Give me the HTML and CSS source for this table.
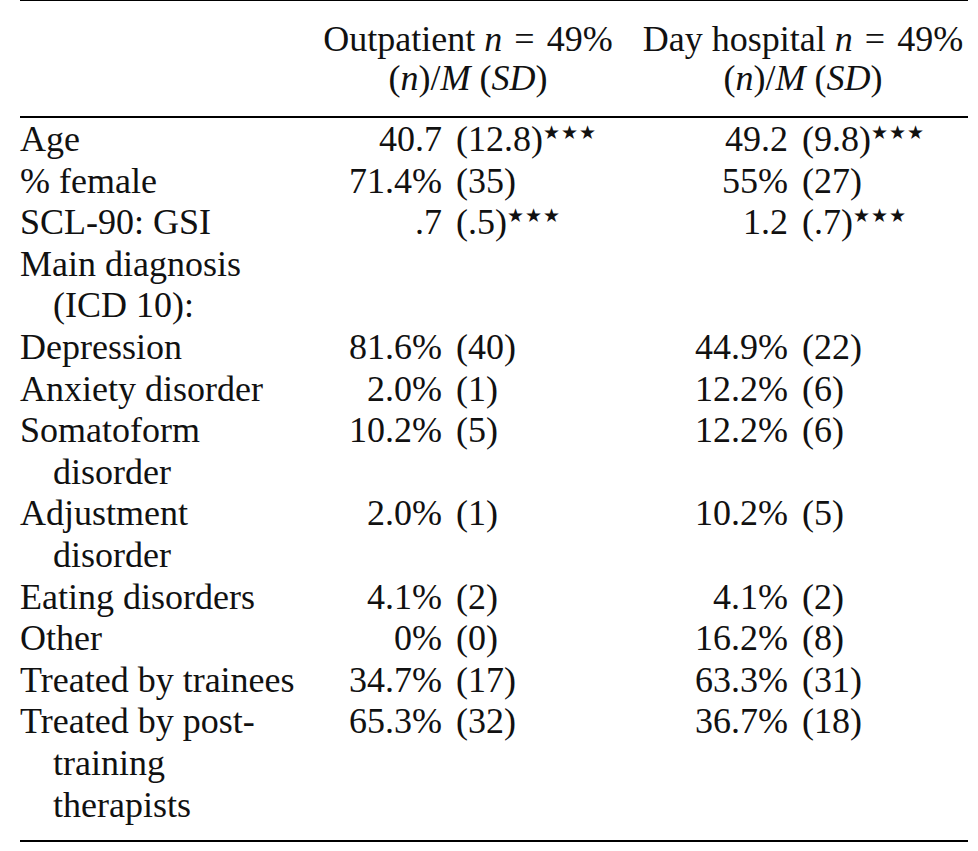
FILE: index.html
```html
<!DOCTYPE html>
<html lang="en">
<head>
<meta charset="utf-8">
<title>Sample characteristics</title>
<link rel="stylesheet" href="styles.css">
</head>
<body>
<div class="table">
  <div class="rule rule-top"></div>

  <div class="th th-label"></div>
  <div class="th col1">
    <span class="hline">Outpatient <i>n</i> <span class="eq">=</span> 49%</span>
    <span class="hline">(<i>n</i>)/<i>M</i> (<i>SD</i>)</span>
  </div>
  <div class="th col2">
    <span class="hline">Day hospital <i>n</i> <span class="eq">=</span> 49%</span>
    <span class="hline">(<i>n</i>)/<i>M</i> (<i>SD</i>)</span>
  </div>

  <div class="rule rule-mid"></div>

  <div class="label">Age</div>
  <div class="val col1"><span class="num">40.7</span><span class="par">(12.8)<span class="stars">★★★</span></span></div>
  <div class="val col2"><span class="num">49.2</span><span class="par">(9.8)<span class="stars">★★★</span></span></div>

  <div class="label">% female</div>
  <div class="val col1"><span class="num">71.4%</span><span class="par">(35)</span></div>
  <div class="val col2"><span class="num">55%</span><span class="par">(27)</span></div>

  <div class="label">SCL-90: GSI</div>
  <div class="val col1"><span class="num">.7</span><span class="par">(.5)<span class="stars">★★★</span></span></div>
  <div class="val col2"><span class="num">1.2</span><span class="par">(.7)<span class="stars">★★★</span></span></div>

  <div class="label">Main diagnosis (ICD 10):</div>
  <div class="val col1"></div>
  <div class="val col2"></div>

  <div class="label">Depression</div>
  <div class="val col1"><span class="num">81.6%</span><span class="par">(40)</span></div>
  <div class="val col2"><span class="num">44.9%</span><span class="par">(22)</span></div>

  <div class="label">Anxiety disorder</div>
  <div class="val col1"><span class="num">2.0%</span><span class="par">(1)</span></div>
  <div class="val col2"><span class="num">12.2%</span><span class="par">(6)</span></div>

  <div class="label">Somatoform disorder</div>
  <div class="val col1"><span class="num">10.2%</span><span class="par">(5)</span></div>
  <div class="val col2"><span class="num">12.2%</span><span class="par">(6)</span></div>

  <div class="label">Adjustment disorder</div>
  <div class="val col1"><span class="num">2.0%</span><span class="par">(1)</span></div>
  <div class="val col2"><span class="num">10.2%</span><span class="par">(5)</span></div>

  <div class="label">Eating disorders</div>
  <div class="val col1"><span class="num">4.1%</span><span class="par">(2)</span></div>
  <div class="val col2"><span class="num">4.1%</span><span class="par">(2)</span></div>

  <div class="label">Other</div>
  <div class="val col1"><span class="num">0%</span><span class="par">(0)</span></div>
  <div class="val col2"><span class="num">16.2%</span><span class="par">(8)</span></div>

  <div class="label">Treated by trainees</div>
  <div class="val col1"><span class="num">34.7%</span><span class="par">(17)</span></div>
  <div class="val col2"><span class="num">63.3%</span><span class="par">(31)</span></div>

  <div class="label">Treated by post-training therapists</div>
  <div class="val col1"><span class="num">65.3%</span><span class="par">(32)</span></div>
  <div class="val col2"><span class="num">36.7%</span><span class="par">(18)</span></div>

  <div class="rule rule-bottom"></div>
</div>
</body>
</html>
```

FILE: styles.css
```css
html, body {
  margin: 0;
  padding: 0;
  background: #ffffff;
}

body {
  font-family: "Liberation Serif", "Times New Roman", serif;
  font-size: 36px;
  color: #111111;
}

.table {
  display: grid;
  grid-template-columns: 296px 304px 348px;
  width: 948px;
  margin: -1px 0 0 20px;
}

.rule {
  grid-column: 1 / -1;
  height: 2px;
  background: #000000;
}

.rule-mid {
  margin-bottom: 1px;
}

.rule-bottom {
  margin-top: 14px;
}

.th {
  padding: 19px 0 18px;
  line-height: 39px;
  text-align: center;
  white-space: nowrap;
}

.hline {
  display: block;
}

.eq {
  margin: 0 3px;
}

.col2 {
  padding-left: 18px;
}

.label {
  line-height: 41.6px;
  padding-left: 33px;
  text-indent: -33px;
  padding-right: 12px;
}

.val {
  display: flex;
  align-items: flex-start;
  line-height: 41.6px;
  white-space: nowrap;
}

.val .num {
  width: 126px;
  text-align: right;
  flex: none;
}

.val.col2 .num {
  width: 150px;
}

.val .par {
  padding-left: 14px;
}

.stars {
  font-family: "DejaVu Sans", sans-serif;
  font-size: 19px;
  letter-spacing: 1px;
  line-height: 0;
  vertical-align: 12px;
}
```
